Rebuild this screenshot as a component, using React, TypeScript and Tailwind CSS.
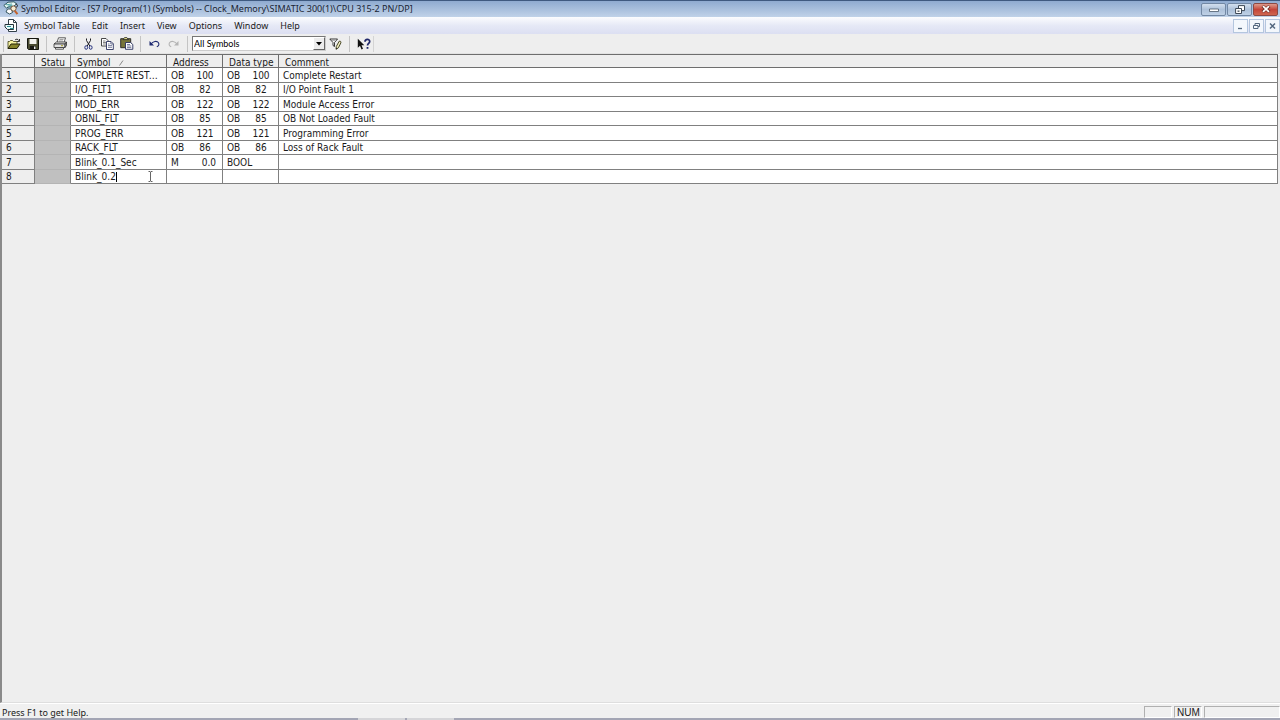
import { type ReactNode } from 'react'

type SymbolRow = {
  symbol: string
  address?: [string, string]
  dataType?: [string, string]
  comment?: string
}

const MENUS = ['Symbol Table', 'Edit', 'Insert', 'View', 'Options', 'Window', 'Help']

const ROWS: SymbolRow[] = [
  { symbol: 'COMPLETE RESTART', address: ['OB', '100'], dataType: ['OB', '100'], comment: 'Complete Restart' },
  { symbol: 'I/O_FLT1', address: ['OB', '82'], dataType: ['OB', '82'], comment: 'I/O Point Fault 1' },
  { symbol: 'MOD_ERR', address: ['OB', '122'], dataType: ['OB', '122'], comment: 'Module Access Error' },
  { symbol: 'OBNL_FLT', address: ['OB', '85'], dataType: ['OB', '85'], comment: 'OB Not Loaded Fault' },
  { symbol: 'PROG_ERR', address: ['OB', '121'], dataType: ['OB', '121'], comment: 'Programming Error' },
  { symbol: 'RACK_FLT', address: ['OB', '86'], dataType: ['OB', '86'], comment: 'Loss of Rack Fault' },
  { symbol: 'Blink_0.1_Sec', address: ['M', '0.0'], dataType: ['BOOL', ''] },
]

function AppIcon() {
  return (
    <svg width="16" height="16" viewBox="0 0 16 16" aria-hidden="true">
      <path d="M.8 4.500 5 1.200l6-.4 2.500 2L10 6 6 5.800 3.500 7z" fill="#eefaf8" stroke="#1d4a50" strokeWidth=".9" />
      <path d="M3 3.800 9 3M4.500 5.200 9.500 4.200" stroke="#2a8f8f" strokeWidth=".8" />
      <path d="M4.500 8h4l1 3.500-3 1.500-3.500-2z" fill="#fff" stroke="#27494f" strokeWidth=".9" />
      <circle cx="10.500" cy="7.500" r="2.600" fill="#f8ecd2" stroke="#6b4a30" strokeWidth=".9" />
      <path d="M11.800 9.800l2.700 3.400" stroke="#c4622a" strokeWidth="2" />
      <path d="M13 2.500l1.500 2-1 2" fill="none" stroke="#222" />
    </svg>
  )
}

function DocIcon() {
  return (
    <svg width="14" height="14" viewBox="0 0 14 14" aria-hidden="true">
      <path d="M4.500.5h5l3 3v9h-8z" fill="#fff" stroke="#33414a" />
      <path d="M9.500.5v3h3" fill="none" stroke="#33414a" />
      <path d="M1 5.500h8.500v5H3.500L1 8z" fill="#e9fbfb" stroke="#26333b" />
      <path d="M3 7.500h4M6 9.500h4" stroke="#2c8c92" />
    </svg>
  )
}

function OpenIcon() {
  return (
    <svg width="14" height="12" viewBox="0 0 14 12" aria-hidden="true">
      <path d="M1 10.500v-7h1.500l1-1h2l1 1h3.500V6" fill="#f6f2a0" stroke="#3b3a12" strokeWidth=".8" />
      <path d="M1 10.500 4 6h9l-3 4.500z" fill="#85832a" stroke="#22220a" />
      <path d="M8 2c1-1.200 3-1.200 4 .8M12.500 1v2.500H10" fill="none" stroke="#222" strokeWidth=".9" />
    </svg>
  )
}

function SaveIcon() {
  return (
    <svg width="12" height="12" viewBox="0 0 12 12" aria-hidden="true">
      <path d="M.5.5h11v11h-10l-1-1z" fill="#4a4b30" stroke="#15160f" />
      <path d="M2.500 1h7v5h-7z" fill="#f2f2ee" />
      <path d="M3 8h6v3H3z" fill="#1a1a14" />
      <path d="M7 8.500h1.500V11H7z" fill="#eee" />
    </svg>
  )
}

function PrintIcon() {
  return (
    <svg width="15" height="13" viewBox="0 0 15 13" aria-hidden="true">
      <path d="M4 5.500 5.500.8h7L11 5.500z" fill="#fff" stroke="#333" strokeWidth=".8" />
      <path d="M6.500 2.500h4M6 4h4" stroke="#777" strokeWidth=".7" />
      <path d="M1 7l2.500-2h10L12 7z" fill="#eee" stroke="#333" strokeWidth=".8" />
      <path d="M1 7h11v3.500H1z" fill="#e2e2e2" stroke="#333" strokeWidth=".8" />
      <path d="M12 7l1.500-2v3.500L12 10.500z" fill="#999" stroke="#333" strokeWidth=".8" />
      <path d="M2.500 10.500h8v1.700h-8z" fill="#f4f4f4" stroke="#333" strokeWidth=".8" />
      <path d="M8 8.700h2" stroke="#a59a20" />
    </svg>
  )
}

function CutIcon() {
  return (
    <svg width="9" height="12" viewBox="0 0 9 12" aria-hidden="true">
      <path d="M2.500 .5v2L5.800 8M6.500 .5v2L3.200 8" fill="none" stroke="#1c1c22" />
      <ellipse cx="2.200" cy="9.500" rx="1.400" ry="1.800" fill="none" stroke="#23307c" />
      <ellipse cx="6.700" cy="9.500" rx="1.400" ry="1.800" fill="none" stroke="#23307c" />
    </svg>
  )
}

function CopyIcon() {
  return (
    <svg width="13" height="12" viewBox="0 0 13 12" aria-hidden="true">
      <path d="M.5.5H5l2 2v5.500H.5z" fill="#fff" stroke="#333" strokeWidth=".9" />
      <path d="M2 3h2.500M2 4.500h3M2 6h3" stroke="#555" strokeWidth=".7" />
      <path d="M5.500 3.500H10l2.300 2.300v5.700H5.500z" fill="#fff" stroke="#28305e" strokeWidth=".9" />
      <path d="M9.800 3.500V6h2.500M7 6h1.500M7 7.600h4M7 9.300h4" fill="none" stroke="#3d4670" strokeWidth=".7" />
    </svg>
  )
}

function PasteIcon() {
  return (
    <svg width="14" height="13" viewBox="0 0 14 13" aria-hidden="true">
      <path d="M.7 1.700h10v9H.7z" fill="#77753a" stroke="#222" strokeWidth=".9" />
      <path d="M3 2.600 4.500.6h2.400l1.500 2z" fill="#e8e48e" stroke="#222" strokeWidth=".8" />
      <path d="M5.500 5.500h5l2.300 2v4.800H5.500z" fill="#fff" stroke="#28305e" strokeWidth=".9" />
      <path d="M7 7.500h3M7 9h4.300M7 10.600h4.300" stroke="#3d4670" strokeWidth=".7" />
    </svg>
  )
}

function UndoIcon() {
  return (
    <svg width="11" height="8" viewBox="0 0 11 8" aria-hidden="true">
      <path d="M.5 1v4.500H5z" fill="#1f2a70" />
      <path d="M2 4C4 1.200 8 .5 9.500 2.800c1 1.700 0 3.200-1.700 4" fill="none" stroke="#1f2a70" strokeWidth="1.100" />
    </svg>
  )
}

function RedoIcon() {
  return (
    <svg width="11" height="8" viewBox="0 0 11 8" aria-hidden="true">
      <path d="M10.500 1v4.500H6z" fill="#b4b4b4" />
      <path d="M9 4C7 1.200 3 .5 1.500 2.800c-1 1.700 0 3.200 1.700 4" fill="none" stroke="#b4b4b4" strokeWidth="1.100" />
    </svg>
  )
}

function FilterIcon() {
  return (
    <svg width="13" height="12" viewBox="0 0 13 12" aria-hidden="true">
      <path d="M.8 1h7.700L5.500 4.500v4L4 7.500v-3z" fill="#fff" stroke="#222" strokeWidth=".9" />
      <path d="M2.500 2.300h3.500" stroke="#777" strokeWidth=".7" />
      <path d="M10.200 3.200c1.500-.3 2 .6 1.600 1.800L9.400 9.800 7 11.300l.3-2.800z" fill="#ecebc0" stroke="#3a3814" strokeWidth=".9" />
      <path d="M7 11.300l.2-1.600 1.200.7z" fill="#222" />
    </svg>
  )
}

function HelpPointerIcon() {
  return (
    <svg width="14" height="12" viewBox="0 0 14 12" aria-hidden="true">
      <path d="M.8.8v9l2.200-2 1.500 3.600 1.500-.7L4.500 7.300h2.800z" fill="#111" />
      <path d="M8 3.800C8 .8 12.700.6 12.700 3.500c0 1.800-2.200 1.900-2.200 4" fill="none" stroke="#1f2668" strokeWidth="1.700" />
      <path d="M9.600 9h1.800v1.800H9.600z" fill="#1f2668" />
    </svg>
  )
}

function MinimizeGlyph() {
  return (
    <svg width="10" height="8" viewBox="0 0 10 8" aria-hidden="true">
      <path d="M.5 4h9v2.500h-9z" fill="#fff" stroke="#4b5a6b" strokeWidth=".8" />
    </svg>
  )
}

function RestoreGlyph() {
  return (
    <svg width="10" height="9" viewBox="0 0 10 9" aria-hidden="true">
      <path d="M3.500.6h6v5h-6z" fill="#fff" stroke="#3d4856" />
      <path d="M.6 3.500h5.900v5H.6z" fill="#fff" stroke="#3d4856" />
      <path d="M2.500 5.500h2v1.300h-2z" fill="#3d4856" />
    </svg>
  )
}

function CloseGlyph() {
  return (
    <svg width="10" height="8" viewBox="0 0 10 8" aria-hidden="true">
      <path d="M1.500 1l7 6M8.500 1l-7 6" stroke="#6b2c25" strokeWidth="3" />
      <path d="M2 1.200l6 5.600M8 1.200 2 6.800" stroke="#fff" strokeWidth="1.800" />
    </svg>
  )
}

function ToolButton({ label, disabled, children }: { label: string; disabled?: boolean; children: ReactNode }) {
  return (
    <button type="button" aria-label={label} disabled={disabled} className="flex h-4 w-[19px] items-center justify-center">
      {children}
    </button>
  )
}

function Separator() {
  return (
    <span className="flex w-[9px] justify-center">
      <span className="h-4 w-px bg-[#c4c4c4]" />
    </span>
  )
}

function CaptionButton({ label, close, children }: { label: string; close?: boolean; children: ReactNode }) {
  const tone = close
    ? 'border-[#8c4a44] bg-linear-to-b from-[#dd9a8c] via-[#c4453a] to-[#cf6650]'
    : 'border-[#7288a4] bg-linear-to-b from-[#d3dfee] via-[#adc1da] to-[#bfd1e6]'
  return (
    <button type="button" aria-label={label} className={`flex h-[13px] w-[25px] items-center justify-center rounded-[2px] border ${tone}`}>
      {children}
    </button>
  )
}

function ChildButton({ label, children }: { label: string; children: ReactNode }) {
  return (
    <button type="button" aria-label={label} className="flex h-[14px] w-[15px] items-center justify-center border border-[#b4c6de] bg-[#f3f7fc]">
      <svg width="9" height="8" viewBox="0 0 9 8" fill="none" stroke="#53677f" aria-hidden="true">
        {children}
      </svg>
    </button>
  )
}

function TitleBar() {
  return (
    <header className="flex h-[17px] items-center border-t border-[#3f5a80] bg-linear-to-b from-[#8fabd0] to-[#c0d2e8] pr-0.5 pl-[3px]">
      <AppIcon />
      <h1 className="ml-0.5 flex-1 truncate text-[9px] leading-[14px] text-[#1a2433]">
        Symbol Editor - [S7 Program(1) (Symbols) -- Clock_Memory\SIMATIC 300(1)\CPU 315-2 PN/DP]
      </h1>
      <div className="flex gap-px">
        <CaptionButton label="Minimize"><MinimizeGlyph /></CaptionButton>
        <CaptionButton label="Restore"><RestoreGlyph /></CaptionButton>
        <CaptionButton label="Close" close><CloseGlyph /></CaptionButton>
      </div>
    </header>
  )
}

function MenuBar() {
  return (
    <nav className="flex h-[17px] items-center bg-linear-to-b from-[#fbfcfe] via-[#e6e9f6] to-[#dcdff2] pl-1">
      <DocIcon />
      <div className="flex flex-1">
        {MENUS.map((menu) => (
          <button key={menu} type="button" className="px-1.5 text-[9px] leading-[14px] text-[#1b1b22]">
            {menu}
          </button>
        ))}
      </div>
      <div className="flex gap-px">
        <ChildButton label="Minimize child"><path d="M2 6.500h4" strokeWidth="1.300" /></ChildButton>
        <ChildButton label="Restore child"><path d="M3 3V1.500h4.500v3H6M1.500 3.500H6v3H1.500z" /></ChildButton>
        <ChildButton label="Close child"><path d="M2 1.500l5 5M7 1.500l-5 5" strokeWidth="1.500" /></ChildButton>
      </div>
    </nav>
  )
}

function Toolbar() {
  return (
    <div role="toolbar" className="flex h-5 items-center border-b border-[#e2e2e2] pl-[3px]">
      <span className="h-4 w-px bg-[#c4c4c4]" />
      <ToolButton label="Open"><OpenIcon /></ToolButton>
      <ToolButton label="Save"><SaveIcon /></ToolButton>
      <Separator />
      <ToolButton label="Print"><PrintIcon /></ToolButton>
      <Separator />
      <ToolButton label="Cut"><CutIcon /></ToolButton>
      <ToolButton label="Copy"><CopyIcon /></ToolButton>
      <ToolButton label="Paste"><PasteIcon /></ToolButton>
      <Separator />
      <ToolButton label="Undo"><UndoIcon /></ToolButton>
      <ToolButton label="Redo" disabled><RedoIcon /></ToolButton>
      <Separator />
      <div className="relative w-[134px]">
        <select
          aria-label="Symbol filter"
          className="block h-[15px] w-full appearance-none border border-t-[#777] border-r-[#ccc] border-b-[#ccc] border-l-[#777] bg-white pl-px font-['Lato',sans-serif] text-[9px] leading-3 text-black"
        >
          <option>All Symbols</option>
        </select>
        <span className="pointer-events-none absolute top-px right-px flex h-[13px] w-3 items-center justify-center border border-t-white border-r-[#666] border-b-[#666] border-l-white bg-[#ececec]">
          <svg width="6" height="4" viewBox="0 0 6 4" aria-hidden="true">
            <path d="M0 0h6L3 3.500z" fill="#000" />
          </svg>
        </span>
      </div>
      <ToolButton label="Filter"><FilterIcon /></ToolButton>
      <Separator />
      <ToolButton label="Context help"><HelpPointerIcon /></ToolButton>
      <span className="h-4 w-px bg-[#d4d4d4]" />
    </div>
  )
}

function Th({ children }: { children?: ReactNode }) {
  return <th className="truncate border-r border-b border-[#6e6e6e] pt-[3px] pl-1.5 text-left leading-[9px] font-normal">{children}</th>
}

function Td({ children }: { children?: ReactNode }) {
  return <td className="truncate border-r border-b border-[#808080] bg-white px-1">{children}</td>
}

// block numbers sit centred in their slot, bit addresses run to its right edge
function Operand({ value }: { value?: [string, string] }) {
  if (!value) return null
  const [area, number] = value
  return (
    <span className="flex justify-between pr-0.5">
      <span>{area}</span>
      {number && <span className={number.includes('.') ? 'w-[22px] text-right' : 'w-[22px] text-center'}>{number}</span>}
    </span>
  )
}

function RowHead({ index }: { index: number }) {
  return (
    <>
      <th scope="row" className="border-r border-b border-[#808080] bg-[#eeeeee] pl-1 text-left font-normal">{index}</th>
      <td className="border-r border-b border-r-[#808080] border-b-[#b4b4b4] bg-[#c0c0c0]" />
    </>
  )
}

function SymbolTable() {
  return (
    <table className="w-full table-fixed border-separate border-spacing-0 border-t border-[#6e6e6e] font-['DejaVu_Sans_Condensed','Noto_Sans',sans-serif] text-[10px] leading-[13px] text-[#1a1a1a]">
      <colgroup>
        <col className="w-[33px]" />
        <col className="w-9" />
        <col className="w-24" />
        <col className="w-14" />
        <col className="w-14" />
        <col />
      </colgroup>
      <thead>
        <tr className="h-[13px]">
          <Th />
          <Th>Statu</Th>
          <Th>
            Symbol
            <svg width="5" height="6" viewBox="0 0 5 6" className="ml-2 inline-block" aria-hidden="true">
              <path d="M.5 5.500 4 .5" stroke="#888" />
            </svg>
          </Th>
          <Th>Address</Th>
          <Th>Data type</Th>
          <Th>Comment</Th>
        </tr>
      </thead>
      <tbody>
        {ROWS.map((row, i) => (
          <tr key={row.symbol} className="odd:h-[15px] even:h-[14px]">
            <RowHead index={i + 1} />
            <Td>{row.symbol}</Td>
            <Td><Operand value={row.address} /></Td>
            <Td><Operand value={row.dataType} /></Td>
            <Td>{row.comment}</Td>
          </tr>
        ))}
        <tr className="h-[14px]">
          <RowHead index={ROWS.length + 1} />
          <Td>
            <div className="relative">
              <input aria-label="Symbol" defaultValue="Blink_0.2" className="block h-[13px] w-full outline-none" />
              <span className="absolute top-0.5 left-[41px] h-2.5 w-px bg-black" />
              <svg width="5" height="11" viewBox="0 0 5 11" className="absolute top-px left-[73px]" aria-hidden="true">
                <path d="M.5.5H2l.5.5.5-.5h1.500M2.500 1v9M.5 10.500H2l.5-.5.5.5h1.500" fill="none" stroke="#555" strokeWidth=".9" />
              </svg>
            </div>
          </Td>
          <Td />
          <Td />
          <Td />
        </tr>
      </tbody>
    </table>
  )
}

function StatusBar() {
  return (
    <footer className="flex h-[15px] items-end gap-0.5 border-t border-white bg-[#f0f0f0] pl-0.5 text-[9px] leading-[11px] text-[#1a1a1a]">
      <p className="flex-1">Press F1 to get Help.</p>
      <span className="h-3 w-7 border border-t-[#b0b0b0] border-r-white border-b-white border-l-[#b0b0b0]" />
      <span className="h-3 w-7 border border-t-[#b0b0b0] border-r-white border-b-white border-l-[#b0b0b0] pl-0.5 font-['Liberation_Sans',sans-serif] text-[10px]">NUM</span>
      <span className="h-3 w-[76px] border border-t-[#b0b0b0] border-r-white border-b-white border-l-[#b0b0b0]" />
    </footer>
  )
}

export default function App() {
  return (
    <div className="flex h-screen flex-col overflow-hidden bg-[#eeeeee] font-['Noto_Sans',sans-serif]">
      <TitleBar />
      <MenuBar />
      <Toolbar />
      <main className="flex-1 border-b border-l-2 border-b-[#dedede] border-l-[#8a8a8a] pr-0.5">
        <SymbolTable />
      </main>
      <StatusBar />
      {/* sliver of the taskbar */}
      <div className="flex h-0.5 gap-0.5 bg-[#a3a5b4] pl-[358px]">
        <span className="w-[47px] bg-[#d5d5d8]" />
        <span className="w-[47px] bg-[#d5d5d8]" />
      </div>
    </div>
  )
}
